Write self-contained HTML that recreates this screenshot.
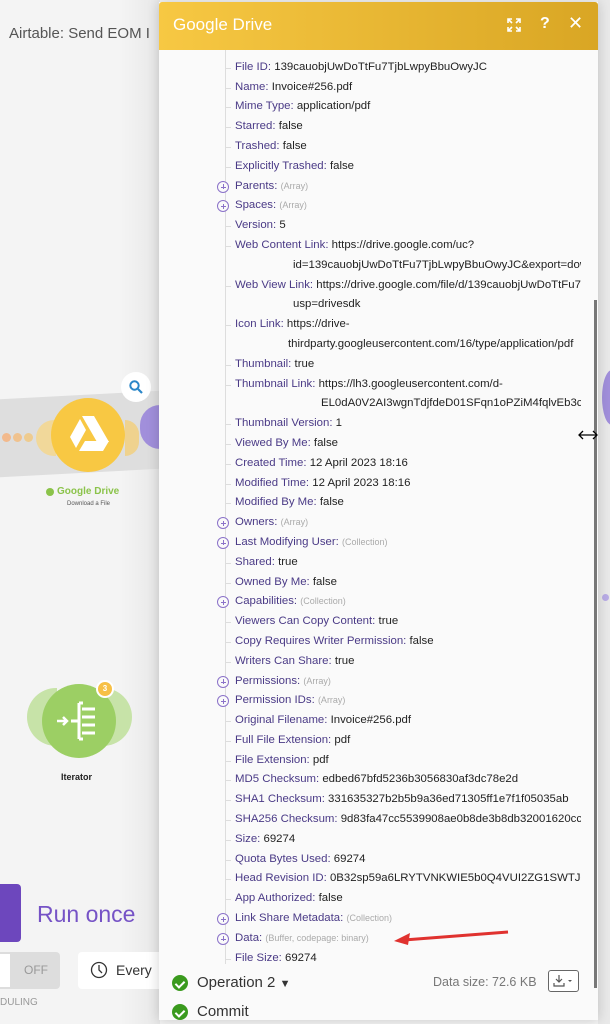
<!DOCTYPE html>
<html><head><meta charset="utf-8">
<style>
*{margin:0;padding:0;box-sizing:border-box}
body{width:610px;height:1024px;overflow:hidden;background:#f4f4f4;font-family:"Liberation Sans",sans-serif;position:relative}
.abs{position:absolute}
#panel{left:159px;top:2px;width:439px;height:1018px;background:#fafafa;box-shadow:0 0 12px rgba(0,0,0,.18);overflow:hidden}
#hdr{position:absolute;left:0;top:0;width:439px;height:48px;background:linear-gradient(90deg,#f7c843,#d9a624);border-radius:3px 3px 0 0;z-index:2}
#hdr .t{position:absolute;left:14px;top:13px;color:#fff;font-size:17px}
#rows{position:absolute;left:0;top:36px;width:422px;overflow:hidden;font-size:11.4px}
.r{height:19.8px;line-height:19.8px;position:relative;white-space:nowrap;padding-left:76px;color:#222}
.r b{font-weight:normal;color:#4a3a86}
.r i{font-style:normal;color:#aaa;font-size:9px}
.r:before{content:"";position:absolute;left:66px;top:0;width:1px;height:100%;background:#ddd}
.r:after{content:"";position:absolute;left:66px;top:10px;width:6px;height:1px;background:#ddd}
.p:after{display:none}
.pl{position:absolute;left:58px;top:4px;width:12px;height:12px;border:1px solid #8b72c9;border-radius:50%;background:#fafafa;z-index:1}
.pl:before{content:"";position:absolute;left:2.5px;top:5px;width:5px;height:1px;background:#8b72c9}
.pl:after{content:"";position:absolute;left:5px;top:2.5px;width:1px;height:5px;background:#8b72c9}
.ok{position:absolute;width:16px;height:16px;border-radius:50%;background:#3a9a1e}
.ok:after{content:"";position:absolute;left:5px;top:3.5px;width:4px;height:7px;border:solid #fff;border-width:0 2px 2px 0;transform:rotate(45deg)}
</style></head><body>
<div class="abs" style="left:9px;top:25px;font-size:15px;color:#555">Airtable: Send EOM I</div>
<div class="abs" style="left:120px;top:0;width:40px;height:1024px;background:linear-gradient(90deg,rgba(0,0,0,0),rgba(0,0,0,.05))"></div>
<div class="abs" style="left:0;top:395px;width:160px;height:78px;background:#dedede;transform:skewY(-3deg)"></div>
<div class="abs" style="left:2px;top:433px;width:9px;height:9px;border-radius:50%;background:#f2b98c"></div>
<div class="abs" style="left:13px;top:433px;width:9px;height:9px;border-radius:50%;background:#f0c28e"></div>
<div class="abs" style="left:24px;top:433px;width:9px;height:9px;border-radius:50%;background:#eecb8f"></div>
<div class="abs" style="left:36px;top:420px;width:20px;height:36px;border-radius:20px 0 0 20px;background:#f1d89a"></div>
<div class="abs" style="left:51px;top:398px;width:74px;height:74px;border-radius:50%;background:#f8c843"></div>
<svg class="abs" style="left:65px;top:414px" width="46" height="40" viewBox="0 0 46 40"><path d="M17 2h12l15 26H32z M15 5l6 11-10 18-6-11z M14 37l6-10h24l-6 10z" fill="#fff"/></svg>
<div class="abs" style="left:125px;top:420px;width:14px;height:36px;border-radius:0 20px 20px 0;background:#efd28e"></div>
<div class="abs" style="left:140px;top:405px;width:20px;height:44px;border-radius:22px 0 0 22px;background:#a18fdb"></div>
<div class="abs" style="left:121px;top:372px;width:30px;height:30px;border-radius:50%;background:#fff"></div>
<svg class="abs" style="left:128px;top:379px" width="16" height="16"><circle cx="6.5" cy="6.5" r="4.2" fill="none" stroke="#2a86c8" stroke-width="2"/><path d="M10 10l4 4" stroke="#2a86c8" stroke-width="2.2"/></svg>
<div class="abs" style="left:46px;top:488px;width:8px;height:8px;border-radius:50%;background:#8bc34a"></div>
<div class="abs" style="left:57px;top:486px;font-size:10px;font-weight:bold;color:#8bc34a">Google Drive</div>
<div class="abs" style="left:67px;top:501px;font-size:6px;color:#555">Download a File</div>
<div class="abs" style="left:27px;top:688px;width:30px;height:58px;border-radius:30px 0 0 30px;background:#c7e3a8"></div>
<div class="abs" style="left:102px;top:688px;width:30px;height:58px;border-radius:0 30px 30px 0;background:#c7e3a8"></div>
<div class="abs" style="left:42px;top:684px;width:74px;height:74px;border-radius:50%;background:#9ccf64"></div>
<svg class="abs" style="left:55px;top:700px" width="48" height="42" viewBox="0 0 48 42"><path d="M2 21h9M8 17l4 4-4 4" stroke="#fff" stroke-width="2.5" fill="none"/><path d="M24 3v36M16 21h8M24 3h4M24 39h4" stroke="#fff" stroke-width="3" fill="none"/><path d="M27 9h13M27 17h13M27 25h13M27 33h13" stroke="#fff" stroke-width="3"/></svg>
<div class="abs" style="left:96px;top:680px;width:18px;height:18px;border-radius:50%;background:#f7c046;border:2px solid #fff;color:#fff;font-size:8px;text-align:center;line-height:14px;font-weight:bold">3</div>
<div class="abs" style="left:61px;top:772px;font-size:9px;font-weight:bold;color:#222">Iterator</div>
<div class="abs" style="left:0;top:884px;width:21px;height:58px;background:#6d47bd;border-radius:0 4px 4px 0"></div>
<div class="abs" style="left:37px;top:901px;font-size:23px;color:#7653c6">Run once</div>
<div class="abs" style="left:0;top:952px;width:60px;height:37px;background:#ddd;border-radius:0 4px 4px 0"></div>
<div class="abs" style="left:0;top:954px;width:10px;height:33px;background:#fff"></div>
<div class="abs" style="left:24px;top:963px;font-size:12px;color:#999">OFF</div>
<div class="abs" style="left:78px;top:952px;width:90px;height:37px;background:#fff;border-radius:4px"></div>
<svg class="abs" style="left:90px;top:961px" width="18" height="18"><circle cx="9" cy="9" r="7.5" fill="none" stroke="#333" stroke-width="1.3"/><path d="M9 4v5l3 3" stroke="#333" stroke-width="1.3" fill="none"/></svg>
<div class="abs" style="left:116px;top:962px;font-size:14px;color:#333">Every</div>
<div class="abs" style="left:0;top:997px;font-size:10px;color:#999">DULING</div>
<div class="abs" style="left:598px;top:0;width:12px;height:1024px;background:#e9e9e9"></div>
<div class="abs" style="left:602px;top:370px;width:20px;height:55px;border-radius:50%;background:#a18fdb"></div>
<div class="abs" style="left:602px;top:594px;width:7px;height:7px;border-radius:50%;background:#b9ace6"></div>

<div id="panel" class="abs">
<div id="hdr"><div class="t">Google Drive</div>
<svg style="position:absolute;left:348px;top:16px" width="14" height="14" viewBox="0 0 14 14" stroke="#fff" stroke-width="1.6" fill="none"><path d="M1 5V1h4M9 1h4v4M13 9v4H9M5 13H1V9M1 1l4 4M13 1L9 5M13 13L9 9M1 13l4-4"/></svg>
<div style="position:absolute;left:381px;top:13px;color:#fff;font-size:16px;font-weight:bold">?</div>
<div style="position:absolute;left:409px;top:11px;color:#fff;font-size:18px">✕</div>
</div>
<div id="rows">
<div class="r"><b>Kind:</b> drive#file</div>
<div class="r"><b>File ID:</b> 139cauobjUwDoTtFu7TjbLwpyBbuOwyJC</div>
<div class="r"><b>Name:</b> Invoice#256.pdf</div>
<div class="r"><b>Mime Type:</b> application/pdf</div>
<div class="r"><b>Starred:</b> false</div>
<div class="r"><b>Trashed:</b> false</div>
<div class="r"><b>Explicitly Trashed:</b> false</div>
<div class="r p"><span class="pl"></span><b>Parents:</b> <i>(Array)</i></div>
<div class="r p"><span class="pl"></span><b>Spaces:</b> <i>(Array)</i></div>
<div class="r"><b>Version:</b> 5</div>
<div class="r"><b>Web Content Link:</b> https://drive.google.com/uc?</div>
<div class="r p"><span style="padding-left:58px">id=139cauobjUwDoTtFu7TjbLwpyBbuOwyJC&amp;export=download</span></div>
<div class="r"><b>Web View Link:</b> https://drive.google.com/file/d/139cauobjUwDoTtFu7TjbLwpy</div>
<div class="r p"><span style="padding-left:58px">usp=drivesdk</span></div>
<div class="r"><b>Icon Link:</b> https://drive-</div>
<div class="r p"><span style="padding-left:53px">thirdparty.googleusercontent.com/16/type/application/pdf</span></div>
<div class="r"><b>Thumbnail:</b> true</div>
<div class="r"><b>Thumbnail Link:</b> https://lh3.googleusercontent.com/d-</div>
<div class="r p"><span style="padding-left:86px">EL0dA0V2AI3wgnTdjfdeD01SFqn1oPZiM4fqlvEb3c</span></div>
<div class="r"><b>Thumbnail Version:</b> 1</div>
<div class="r"><b>Viewed By Me:</b> false</div>
<div class="r"><b>Created Time:</b> 12 April 2023 18:16</div>
<div class="r"><b>Modified Time:</b> 12 April 2023 18:16</div>
<div class="r"><b>Modified By Me:</b> false</div>
<div class="r p"><span class="pl"></span><b>Owners:</b> <i>(Array)</i></div>
<div class="r p"><span class="pl"></span><b>Last Modifying User:</b> <i>(Collection)</i></div>
<div class="r"><b>Shared:</b> true</div>
<div class="r"><b>Owned By Me:</b> false</div>
<div class="r p"><span class="pl"></span><b>Capabilities:</b> <i>(Collection)</i></div>
<div class="r"><b>Viewers Can Copy Content:</b> true</div>
<div class="r"><b>Copy Requires Writer Permission:</b> false</div>
<div class="r"><b>Writers Can Share:</b> true</div>
<div class="r p"><span class="pl"></span><b>Permissions:</b> <i>(Array)</i></div>
<div class="r p"><span class="pl"></span><b>Permission IDs:</b> <i>(Array)</i></div>
<div class="r"><b>Original Filename:</b> Invoice#256.pdf</div>
<div class="r"><b>Full File Extension:</b> pdf</div>
<div class="r"><b>File Extension:</b> pdf</div>
<div class="r"><b>MD5 Checksum:</b> edbed67bfd5236b3056830af3dc78e2d</div>
<div class="r"><b>SHA1 Checksum:</b> 331635327b2b5b9a36ed71305ff1e7f1f05035ab</div>
<div class="r"><b>SHA256 Checksum:</b> 9d83fa47cc5539908ae0b8de3b8db32001620cc</div>
<div class="r"><b>Size:</b> 69274</div>
<div class="r"><b>Quota Bytes Used:</b> 69274</div>
<div class="r"><b>Head Revision ID:</b> 0B32sp59a6LRYTVNKWIE5b0Q4VUI2ZG1SWTJ0Z</div>
<div class="r"><b>App Authorized:</b> false</div>
<div class="r p"><span class="pl"></span><b>Link Share Metadata:</b> <i>(Collection)</i></div>
<div class="r p"><span class="pl"></span><b>Data:</b> <i>(Buffer, codepage: binary)</i></div>
<div class="r" style="height:15px"><b>File Size:</b> 69274</div>
</div>
<div style="position:absolute;left:0;top:966px;width:439px;height:60px;background:#fafafa"></div>
<div class="ok" style="left:13px;top:973px"></div>
<div style="position:absolute;left:38px;top:972px;font-size:15px;color:#333">Operation 2 <span style="font-size:11px">▼</span></div>
<div style="position:absolute;left:274px;top:973px;font-size:12.5px;color:#777">Data size: 72.6 KB</div>
<div style="position:absolute;left:389px;top:968px;width:31px;height:22px;border:1px solid #666;border-radius:3px;background:#fff"></div>
<svg style="position:absolute;left:394px;top:972px" width="22" height="14"><path d="M6 1v7M3 5l3 3 3-3M1 9v3h10V9" stroke="#555" stroke-width="1.2" fill="none"/><path d="M15 6l2 2 2-2z" fill="#555"/></svg>
<div class="ok" style="left:13px;top:1002px"></div>
<div style="position:absolute;left:38px;top:1001px;font-size:15px;color:#333">Commit</div>
<div style="position:absolute;left:435px;top:298px;width:3px;height:688px;background:#777"></div>
</div>
<svg class="abs" style="left:392px;top:928px" width="118" height="18"><path d="M116 4L12 12" stroke="#e0322f" stroke-width="3"/><path d="M2 13l16-8-2 12z" fill="#e0322f"/></svg>
<svg class="abs" style="left:577px;top:429px" width="22" height="12"><path d="M2 6h18M6 2L2 6l4 4M16 2l4 4-4 4" stroke="#000" stroke-width="1.3" fill="#fff"/></svg>
</body></html>
